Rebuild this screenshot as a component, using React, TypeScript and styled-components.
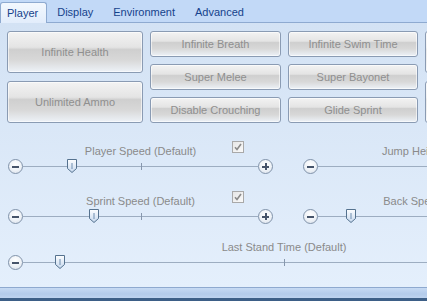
import styled, { createGlobalStyle } from 'styled-components';

const GlobalStyle = createGlobalStyle`
  html, body {
    margin: 0;
    padding: 0;
    overflow: hidden;
    background: #3d5f87;
  }
  body {
    font-family: "Liberation Sans", Arial, sans-serif;
    font-size: 11px;
  }
`;

const Window = styled.div`
  width: 427px;
  height: 301px;
  display: flex;
  flex-direction: column;
  overflow: hidden;
`;

// -- Tabs
const TabStrip = styled.div`
  flex: none;
  height: 22px;
  display: flex;
  align-items: flex-end;
  background: #c2d9f7;
`;

const Tab = styled.div<{ $active?: boolean }>`
  height: 20px;
  line-height: 20px;
  padding: 0 10px;
  color: #15428b;
  white-space: nowrap;
  ${({ $active }) => $active && `
    position: relative;
    z-index: 1;
    margin-bottom: -1px;
    padding: 0 8px 0 6px;
    background: linear-gradient(#f3f8fe, #e2edfb);
    border: 1px solid #8eaad0;
    border-bottom: none;
    border-radius: 3px 3px 0 0;
  `}
`;

// -- Page body
const Panel = styled.div`
  flex: 1;
  min-height: 0;
  overflow: hidden;
  display: flex;
  flex-direction: column;
  gap: 17px;
  padding: 8px 0 0 7px;
  background: linear-gradient(#d3e2f4, #e4effc);
  border-top: 1px solid #8eaad0;
`;

const ButtonGrid = styled.div`
  display: grid;
  grid-template-columns: 136px 131px 130px 136px;
  grid-template-rows: repeat(3, 26px);
  gap: 7px;
`;

const BigColumn = styled.div<{ $col: number }>`
  grid-column: ${({ $col }) => $col};
  grid-row: 1 / span 3;
  display: flex;
  flex-direction: column;
  gap: 8px;
`;

const CheatButton = styled.button<{ $big?: boolean }>`
  ${({ $big }) => $big && 'flex: 1;'}
  margin: 0;
  padding: 0;
  border: 1px solid #8a9bb3;
  border-radius: 3px;
  font-family: inherit;
  font-size: 11px;
  color: #8f8f8f;
  white-space: nowrap;
  background: linear-gradient(
    #f3f3f3 0%,
    #e4e4e4 38%,
    #cfcfcf 44%,
    #d8d8d8 70%,
    #edf2f8 100%
  );
  box-shadow: inset 0 0 0 1px rgba(255, 255, 255, 0.6);
`;

// -- Sliders
const SliderArea = styled.div`
  display: grid;
  grid-template-columns: 265px 265px;
  column-gap: 30px;
  row-gap: 16px;
  margin-left: 1px;
`;

const SliderBox = styled.div<{ $wide?: boolean }>`
  display: flex;
  flex-direction: column;
  ${({ $wide }) => $wide && `
    grid-column: 1 / -1;
    margin: -4px 8px 0 0;
  `}
`;

const SliderHead = styled.div`
  height: 19px;
  display: grid;
  grid-template-columns: 1fr auto 1fr;
`;

const SliderLabel = styled.span`
  grid-column: 2;
  line-height: 20px;
  padding-top: 1px;
  color: #8a8a8a;
  white-space: nowrap;
`;

const CheckCell = styled.div`
  grid-column: 3;
  display: flex;
  justify-content: flex-end;
  align-items: flex-start;
  padding: 1px 29px 0 0;
`;

const CheckBox = styled.span`
  width: 10px;
  height: 10px;
  border: 1px solid #a9a9a9;
  background: linear-gradient(135deg, #e6e6e6, #fafafa);
  display: flex;
  align-items: center;
  justify-content: center;
`;

const TrackRow = styled.div`
  height: 15px;
  display: flex;
  align-items: center;
`;

const RoundButton = styled.span<{ $plus?: boolean }>`
  flex: none;
  position: relative;
  box-sizing: border-box;
  width: 15px;
  height: 15px;
  border-radius: 50%;
  border: 1px solid #8193aa;
  background: radial-gradient(circle at 50% 35%, #ffffff 0%, #eef2f7 55%, #d4dde8 100%);

  &::before {
    content: '';
    position: absolute;
    left: 3px;
    top: 5.5px;
    width: 7px;
    height: 2px;
    background: #46546a;
  }
  ${({ $plus }) => $plus && `
    &::after {
      content: '';
      position: absolute;
      left: 5.5px;
      top: 3px;
      width: 2px;
      height: 7px;
      background: #46546a;
    }
  `}
`;

const Track = styled.div`
  flex: 1;
  position: relative;
  height: 15px;

  &::before {
    content: '';
    position: absolute;
    left: 0;
    right: 0;
    top: 7px;
    height: 1px;
    background: #9dadc1;
  }
`;

const Tick = styled.span`
  position: absolute;
  left: 50%;
  top: 4px;
  width: 1px;
  height: 7px;
  background: #8797ad;
`;

const ThumbWrap = styled.span`
  position: absolute;
  top: 0;
  width: 10px;
  height: 14px;
  transform: translateX(-5px);
  display: block;
`;

const BottomBand = styled.div`
  flex: none;
  height: 10px;
  border-top: 1px solid #8ea9cf;
  background: linear-gradient(#c6daf3, #b3cbea 60%, #bed3ef);
`;

const BottomEdge = styled.div`
  flex: none;
  height: 3px;
  background: #3d5f87;
`;

const Thumb = ({ left }: { left: number }) => (
  <ThumbWrap style={{ left: `${left}%` }}>
    <svg width="10" height="14" viewBox="0 0 10 14">
      <defs>
        <linearGradient id="thumbFill" x1="0" y1="0" x2="0" y2="1">
          <stop offset="0" stopColor="#fdfeff" />
          <stop offset="1" stopColor="#c6d8ee" />
        </linearGradient>
      </defs>
      <path d="M0.5 0.5 H9.5 V9.5 L5 13.5 L0.5 9.5 Z" fill="url(#thumbFill)" stroke="#55728f" />
      <line x1="5" y1="4" x2="5" y2="10" stroke="#6f8eb0" />
    </svg>
  </ThumbWrap>
);

const Check = () => (
  <svg width="8" height="8" viewBox="0 0 8 8">
    <path d="M1 4.2 L3 6.5 L7 1" fill="none" stroke="#8a8a8a" strokeWidth="1.6" />
  </svg>
);

type SliderProps = {
  label: string;
  value: number;
  checked?: boolean;
  wide?: boolean;
  showThumb?: boolean;
};

const Slider = ({ label, value, checked, wide, showThumb = true }: SliderProps) => (
  <SliderBox $wide={wide}>
    <SliderHead>
      <SliderLabel>{label}</SliderLabel>
      <CheckCell>
        {checked !== undefined && (
          <CheckBox>{checked && <Check />}</CheckBox>
        )}
      </CheckCell>
    </SliderHead>
    <TrackRow>
      <RoundButton />
      <Track>
        <Tick />
        {showThumb && <Thumb left={value} />}
      </Track>
      <RoundButton $plus />
    </TrackRow>
  </SliderBox>
);

const tabs = ['Player', 'Display', 'Environment', 'Advanced'];

export default function App() {
  return (
    <Window>
      <GlobalStyle />
      <TabStrip>
        {tabs.map((t, i) => (
          <Tab key={t} $active={i === 0}>{t}</Tab>
        ))}
      </TabStrip>

      <Panel>
        <ButtonGrid>
          <BigColumn $col={1}>
            <CheatButton $big>Infinite Health</CheatButton>
            <CheatButton $big>Unlimited Ammo</CheatButton>
          </BigColumn>
          <BigColumn $col={4}>
            <CheatButton $big />
            <CheatButton $big />
          </BigColumn>
          <CheatButton>Infinite Breath</CheatButton>
          <CheatButton>Infinite Swim Time</CheatButton>
          <CheatButton>Super Melee</CheatButton>
          <CheatButton>Super Bayonet</CheatButton>
          <CheatButton>Disable Crouching</CheatButton>
          <CheatButton>Glide Sprint</CheatButton>
        </ButtonGrid>

        <SliderArea>
          <Slider label="Player Speed (Default)" value={20.8} checked />
          <Slider label="Jump Height (Default)" value={60} checked showThumb={false} />
          <Slider label="Sprint Speed (Default)" value={30} checked />
          <Slider label="Back Speed (Default)" value={14} checked />
          <Slider label="Last Stand Time (Default)" value={7} wide />
        </SliderArea>
      </Panel>

      <BottomBand />
      <BottomEdge />
    </Window>
  );
}
